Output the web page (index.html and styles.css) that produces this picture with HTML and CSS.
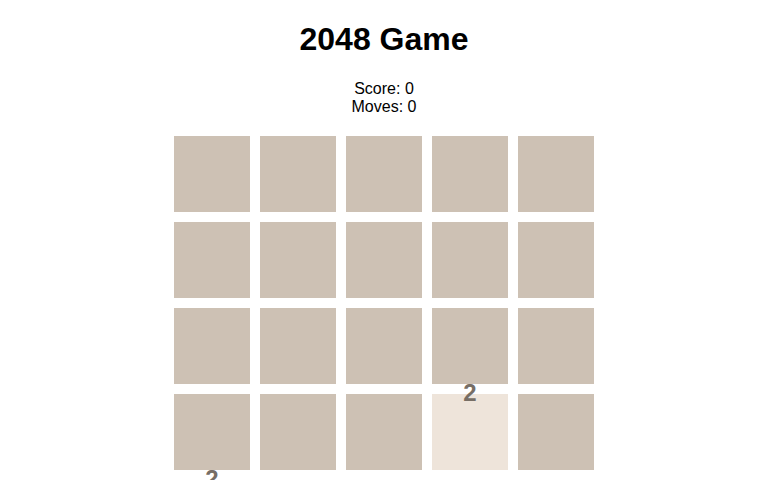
FILE: index.html
```html
<!DOCTYPE html>
<html>
<head>
<meta charset="utf-8">
<title>2048 Game</title>
<link rel="stylesheet" href="styles.css">
</head>
<body>
<div class="game">
  <h1 class="title">2048 Game</h1>
  <div class="stats">
    <div>Score: 0</div>
    <div>Moves: 0</div>
  </div>
  <div class="board">
    <div class="tile"></div><div class="tile"></div><div class="tile"></div><div class="tile"></div><div class="tile"></div>
    <div class="tile"></div><div class="tile"></div><div class="tile"></div><div class="tile"></div><div class="tile"></div>
    <div class="tile"></div><div class="tile"></div><div class="tile"></div><div class="tile"></div><div class="tile"></div>
    <div class="tile"></div><div class="tile"></div><div class="tile"></div><div class="tile tile-2"><span class="num">2</span></div><div class="tile"></div>
    <div class="tile tile-2"><span class="num">2</span></div><div class="tile"></div><div class="tile"></div><div class="tile"></div><div class="tile"></div>
  </div>
</div>
</body>
</html>
```
FILE: styles.css
```css
html, body {
  margin: 0;
  padding: 0;
  background: #ffffff;
}
body {
  font-family: "Liberation Sans", Arial, sans-serif;
  color: #000000;
}
.game {
  display: flex;
  flex-direction: column;
  align-items: center;
}
.title {
  font-size: 32px;
  font-weight: bold;
  margin: 21.44px 0;
  line-height: normal;
}
.stats {
  font-size: 16px;
  text-align: center;
  margin-bottom: 20.5px;
}
.board {
  display: grid;
  grid-template-columns: repeat(5, 76px);
  grid-auto-rows: 76px;
  gap: 10px;
}
.tile {
  background: #cdc1b4;
  display: flow-root;
}
.tile-2 {
  background: #eee4da;
}
.num {
  display: block;
  margin-top: -15px;
  text-align: center;
  font-size: 24px;
  font-weight: bold;
  line-height: normal;
  color: #776e65;
}
```
